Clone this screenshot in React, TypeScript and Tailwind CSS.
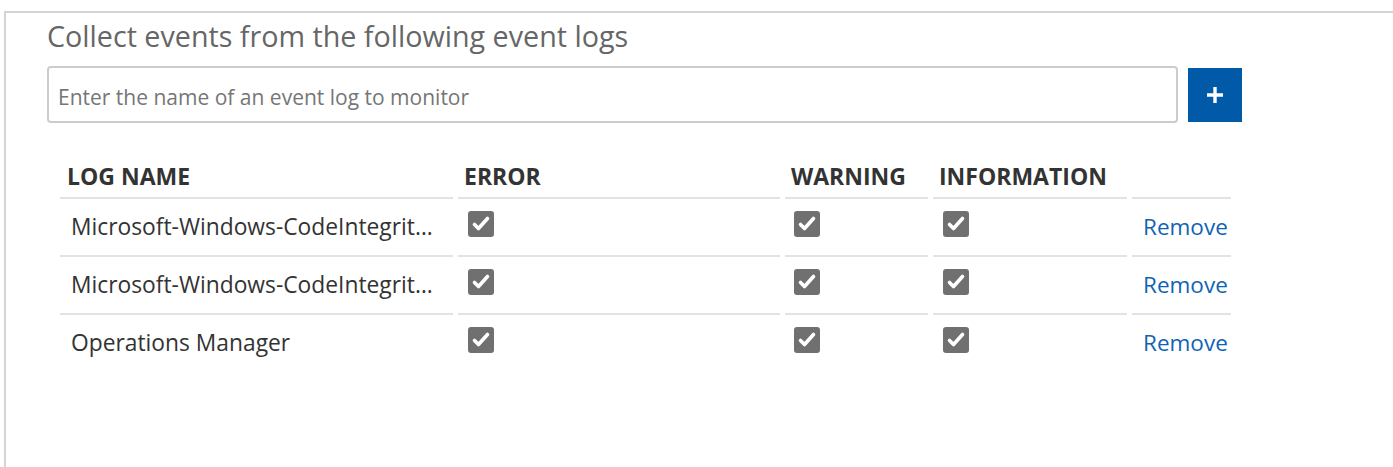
import { useState } from "react";

type LogRow = {
  name: string;
  error: boolean;
  warning: boolean;
  information: boolean;
};

const initialRows: LogRow[] = [
  { name: "Microsoft-Windows-CodeIntegrity/Operational", error: true, warning: true, information: true },
  { name: "Microsoft-Windows-CodeIntegrity/Verbose", error: true, warning: true, information: true },
  { name: "Operations Manager", error: true, warning: true, information: true },
];

function Check({ checked, onToggle }: { checked: boolean; onToggle: () => void }) {
  return (
    <button
      type="button"
      onClick={onToggle}
      className={`flex h-[26px] w-[26px] items-center justify-center rounded-[3px] ${
        checked ? "bg-[#707070]" : "border-2 border-[#707070] bg-white"
      }`}
    >
      {checked && (
        <svg width="26" height="26" viewBox="0 0 26 26">
          <path d="M6.5 13.5 10.5 17.5 19.5 7.5" fill="none" stroke="white" strokeWidth="3.6" strokeLinecap="round" strokeLinejoin="round" />
        </svg>
      )}
    </button>
  );
}

export default function App() {
  const [rows, setRows] = useState(initialRows);

  const toggle = (i: number, key: "error" | "warning" | "information") =>
    setRows((r) => r.map((row, idx) => (idx === i ? { ...row, [key]: !row[key] } : row)));

  return (
    <div className="h-[467px] w-[1393px] overflow-hidden bg-white pt-[11px] font-['Open_Sans',sans-serif]">
      <div className="h-full border-t-2 border-l-2 border-[#d4d4d4] ml-[4px] pl-[41px] pt-[4px]">
        {/* Heading */}
        <h2 className="text-[28.7px] leading-[38px] text-[#666]">Collect events from the following event logs</h2>

        {/* Input + add */}
        <div className="mt-[11px] flex items-center gap-[10px]">
          <input
            placeholder="Enter the name of an event log to monitor"
            className="h-[57px] w-[1131px] rounded-[4px] border-2 border-[#cccccc] px-[9px] pt-[4px] text-[21px] text-[#333] placeholder:text-[#767676] outline-none"
          />
          <button type="button" className="flex h-[54px] w-[54px] items-center justify-center bg-[#005aa8]">
            <svg width="20" height="20" viewBox="0 0 20 20">
              <path d="M10 2v16M2 10h16" stroke="white" strokeWidth="3.4" />
            </svg>
          </button>
        </div>

        {/* Table */}
        <div className="mt-[38px] ml-[13px] grid grid-cols-[393px_322px_143px_194px_99px] gap-x-[5px] text-[#333]">
          <div className="pb-[5px] pl-[7px] text-[23px] leading-[31px] font-bold">LOG NAME</div>
          <div className="pb-[5px] pl-[6px] text-[23px] leading-[31px] font-bold">ERROR</div>
          <div className="pb-[5px] pl-[6px] text-[23px] leading-[31px] font-bold">WARNING</div>
          <div className="pb-[5px] pl-[6px] text-[23px] leading-[31px] font-bold">INFORMATION</div>
          <div />

          {rows.map((row, i) => (
            <div key={row.name} className="contents">
              <div className="flex h-[58px] items-center border-t-2 border-[#e3e3e3] pl-[11px] pr-[12px] text-[22.8px]">
                <span className="truncate">{row.name}</span>
              </div>
              <div className="h-[58px] border-t-2 border-[#e3e3e3] pl-[10px] pt-[12px]">
                <Check checked={row.error} onToggle={() => toggle(i, "error")} />
              </div>
              <div className="h-[58px] border-t-2 border-[#e3e3e3] pl-[9px] pt-[12px]">
                <Check checked={row.warning} onToggle={() => toggle(i, "warning")} />
              </div>
              <div className="h-[58px] border-t-2 border-[#e3e3e3] pl-[10px] pt-[12px]">
                <Check checked={row.information} onToggle={() => toggle(i, "information")} />
              </div>
              <div className="flex h-[58px] items-center border-t-2 border-[#e3e3e3] pl-[11px] text-[22.5px]">
                <button type="button" className="text-[#0f63b5]" onClick={() => setRows((r) => r.filter((_, idx) => idx !== i))}>
                  Remove
                </button>
              </div>
            </div>
          ))}
        </div>
      </div>
    </div>
  );
}
